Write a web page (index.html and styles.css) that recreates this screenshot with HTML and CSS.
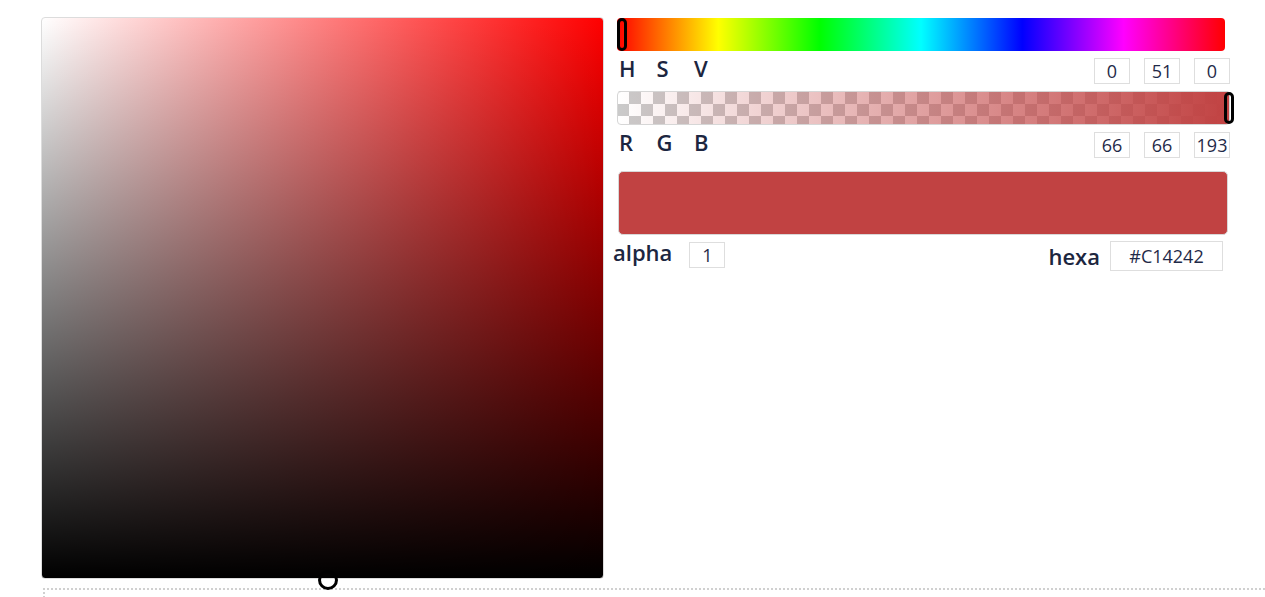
FILE: index.html
```html
<!DOCTYPE html>
<html lang="en">
<head>
<meta charset="utf-8">
<title>Color picker</title>
<link rel="stylesheet" href="styles.css">
</head>
<body>
<div class="picker">
  <div class="sat-box">
    <span class="sat-cursor"></span>
  </div>
  <div class="controls">
    <div class="hue-bar">
      <span class="thumb thumb-hue"></span>
    </div>
    <div class="value-row">
      <div class="letters"><span>H</span><span>S</span><span>V</span></div>
      <div class="fields">
        <input class="num" value="0">
        <input class="num" value="51">
        <input class="num" value="0">
      </div>
    </div>
    <div class="alpha-bar">
      <div class="alpha-fill"></div>
      <span class="thumb thumb-alpha"></span>
    </div>
    <div class="value-row">
      <div class="letters"><span>R</span><span>G</span><span>B</span></div>
      <div class="fields">
        <input class="num" value="66">
        <input class="num" value="66">
        <input class="num" value="193">
      </div>
    </div>
    <div class="swatch"></div>
    <div class="meta-row">
      <div class="meta">
        <label class="meta-label">alpha</label>
        <input class="num alpha-input" value="1">
      </div>
      <div class="meta">
        <label class="meta-label hexa-label">hexa</label>
        <input class="num hex-input" value="#C14242">
      </div>
    </div>
  </div>
</div>
<div class="below"></div>
</body>
</html>
```

FILE: styles.css
```css
html, body {
  margin: 0;
  height: 100%;
  background: #fff;
  overflow: hidden;
}

body {
  font-family: "Open Sans", "Liberation Sans", sans-serif;
  color: #1c2640;
}

.picker {
  display: flex;
  align-items: flex-start;
  gap: 13px;
  padding: 17px 0 0 41px;
}

/* saturation / value square for hue 0 */
.sat-box {
  position: relative;
  flex: none;
  width: 561px;
  height: 560px;
  border: 1px solid #dcdcdc;
  border-radius: 4px;
  background:
    linear-gradient(to bottom, rgba(0,0,0,0), #000),
    linear-gradient(to right, #fff, #f00);
}

.sat-cursor {
  position: absolute;
  left: 276px;
  top: 552px;
  width: 14px;
  height: 14px;
  border: 3px solid #000;
  border-radius: 50%;
}

.controls {
  width: 613px;
  display: flex;
  flex-direction: column;
}

.hue-bar {
  position: relative;
  width: 608px;
  height: 33px;
  margin-top: 1px;
  border-radius: 4px;
  background: linear-gradient(to right,
    #f00 0%, #ff0 16.66%, #0f0 33.33%, #0ff 50%,
    #00f 66.66%, #f0f 83.33%, #f00 100%);
}

.thumb {
  position: absolute;
  top: 0;
  width: 4px;
  height: 27px;
  border: 3px solid #000;
  border-radius: 6px;
}

.thumb-hue {
  left: 0;
}

.value-row {
  display: flex;
  justify-content: space-between;
  align-items: center;
  height: 26px;
  margin-top: 7px;
}

.letters {
  display: flex;
  padding-left: 2px;
}

.letters span {
  width: 37.5px;
  font-size: 22px;
  font-weight: 600;
  line-height: 26px;
  margin-top: -6px;
}

.fields {
  display: flex;
  gap: 14px;
}

.num {
  box-sizing: border-box;
  width: 36px;
  height: 26px;
  padding: 0;
  border: 1px solid #dedede;
  font-family: "Open Sans", "Liberation Sans", sans-serif;
  font-size: 18px;
  color: #1f2a48;
  text-align: center;
  outline: none;
  background: #fff;
}

.alpha-bar {
  position: relative;
  height: 34px;
  margin-top: 7px;
  border-radius: 4px;
  background-color: #fff;
  background-image: conic-gradient(#cacaca 25%, #fff 0 50%, #cacaca 0 75%, #fff 0);
  background-size: 24px 24px;
  background-position: 0 1px;
}

.alpha-fill {
  height: 100%;
  border-radius: 4px;
  box-sizing: border-box;
  border: 1px solid #d6d6d6;
  background: linear-gradient(to right, rgba(193,66,66,0), #c14242);
}

.thumb-alpha {
  left: 607px;
  top: 1px;
  height: 26px;
}

.swatch {
  width: 608px;
  height: 62px;
  margin: 13px 0 0 1px;
  border: 1px solid #d8d8d8;
  border-radius: 5px;
  background: #c14242;
}

.meta-row {
  display: flex;
  justify-content: space-between;
  align-items: flex-start;
  margin-left: -4px;
  width: 610px;
  margin-top: 6px;
}

.meta {
  display: flex;
  align-items: flex-start;
  gap: 16px;
}

.meta-label {
  font-size: 22px;
  font-weight: 600;
  line-height: 26px;
  margin-top: -2px;
}

.hexa-label {
  margin-top: 2px;
}

.alpha-input {
  margin-top: 1px;
  margin-left: 1px;
}

.hex-input {
  width: 113px;
  height: 30px;
  margin-left: -6px;
}

.below {
  margin: 9px 0 0 43px;
  height: 8px;
  border-top: 2px dotted #d0d0d0;
  border-left: 2px dotted #d0d0d0;
}
```
